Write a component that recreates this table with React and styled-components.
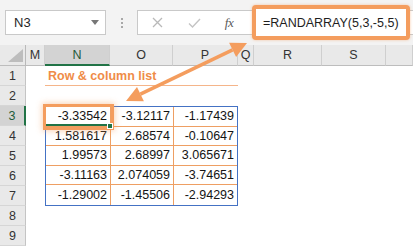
import React from 'react';
import styled, { createGlobalStyle } from 'styled-components';

const GlobalStyle = createGlobalStyle`
  html, body { margin: 0; padding: 0; background: #fff; overflow: hidden; }
  body { font-family: "Liberation Sans", Arial, sans-serif; }
  * { box-sizing: border-box; }
`;

const ORANGE = '#F49D5E';

const Page = styled.div`
  position: relative;
  width: 413px;
  height: 246px;
  overflow: hidden;
  background: #fff;
`;

const Toolbar = styled.div`
  display: flex;
  align-items: center;
  height: 45px;
  padding-left: 5px;
  background: #f3f3f3;
`;

const NameBox = styled.div`
  width: 101px;
  height: 25px;
  background: #fff;
  border: 1px solid #c9c9c9;
  display: flex;
  align-items: center;
  justify-content: space-between;
  padding: 0 6px 0 8px;
  font-size: 13px;
  color: #262626;
`;

const Splitter = styled.div`
  width: 31px;
  display: flex;
  justify-content: center;
  &::before {
    content: '';
    display: block;
    height: 10px;
    border-left: 2px dotted #a8a8a8;
  }
`;

const FormulaInput = styled.div`
  flex: 1;
  height: 25px;
  background: #fff;
  border: 1px solid #c9c9c9;
  border-right: none;
  display: flex;
  align-items: center;
`;

const IconSlot = styled.div`
  width: ${p => p.$w}px;
  display: flex;
  justify-content: center;
  align-items: center;
  color: #6a6a6a;
`;

const Fx = styled.span`
  font-family: "Liberation Serif", "Times New Roman", serif;
  font-style: italic;
  font-size: 13px;
  color: #5a5a5a;
  letter-spacing: -0.5px;
`;

const FormulaText = styled.div`
  margin-left: 6px;
  width: 158px;
  height: 35px;
  flex: none;
  border: 4px solid ${ORANGE};
  border-radius: 4px;
  background: #fff;
  box-shadow: 0 0 3px rgba(244, 157, 94, 0.55);
  display: flex;
  align-items: center;
  padding-left: 7px;
  font-size: 12.5px;
  color: #1e1e1e;
  white-space: nowrap;
`;

const Sheet = styled.div`
  display: grid;
  grid-template-columns: 26px 19px 65px 63px 65px 16px 68px 64px 1fr;
  grid-template-rows: 21px repeat(9, 20px);
`;

const Corner = styled.div`
  background: #e9e9e9;
  border-right: 1px solid #b9b9b9;
  border-bottom: 1px solid #bdbdbd;
  display: flex;
  align-items: flex-end;
  justify-content: flex-end;
  padding: 0 2px 3px 0;
`;

const ColHead = styled.div`
  background: ${p => (p.$active ? '#d3d3d3' : '#e9e9e9')};
  border-right: 1px solid #cfcfcf;
  border-bottom: ${p => (p.$active ? '2px solid #217346' : '1px solid #bdbdbd')};
  display: flex;
  align-items: center;
  justify-content: center;
  font-size: 12.5px;
  color: ${p => (p.$active ? '#1f5c3a' : '#333')};
  padding-top: ${p => (p.$active ? '1px' : '0')};
`;

const RowHead = styled.div`
  grid-column: 1;
  background: ${p => (p.$active ? '#d3d3d3' : '#e9e9e9')};
  border-right: ${p => (p.$active ? '2px solid #217346' : '1px solid #c4c4c4')};
  border-bottom: 1px solid #d6d6d6;
  display: flex;
  align-items: center;
  justify-content: center;
  font-size: 12.5px;
  color: ${p => (p.$active ? '#1f5c3a' : '#333')};
`;

const Title = styled.div`
  grid-column: 3 / 6;
  grid-row: 2;
  border-bottom: 1px solid #F5B58A;
  display: flex;
  align-items: center;
  padding-left: 3px;
  font-size: 12.5px;
  font-weight: bold;
  color: #EF8C48;
`;

const Table = styled.div`
  grid-column: 3 / 6;
  grid-row: 4 / 9;
  display: grid;
  grid-template-columns: 65px 63px 1fr;
  grid-template-rows: repeat(5, 1fr);
  border: 1px solid #4472C4;
`;

const Cell = styled.div`
  position: relative;
  display: flex;
  align-items: center;
  justify-content: flex-end;
  padding-right: 3px;
  font-size: 12.5px;
  color: #141414;
  border-right: ${p => (p.$lastCol ? 'none' : '1px solid #EE9F63')};
  border-bottom: ${p => (p.$lastRow ? 'none' : '1px solid #EE9F63')};
  ${p =>
    p.$selected &&
    `
    z-index: 1;
    box-shadow: 0 0 0 3px ${ORANGE}, 0 0 6px 4px rgba(244, 157, 94, 0.45), inset 0 -2px 0 #217346;
  `}
`;

const FillHandle = styled.span`
  position: absolute;
  right: -3px;
  bottom: -3px;
  width: 6px;
  height: 6px;
  background: #217346;
  border: 1px solid #fff;
`;

const ArrowLayer = styled.svg`
  position: absolute;
  left: 0;
  top: 0;
  pointer-events: none;
`;

const cols = ['M', 'N', 'O', 'P', 'Q', 'R', 'S', ''];
const data = [
  ['-3.33542', '-3.12117', '-1.17439'],
  ['1.581617', '2.68574', '-0.10647'],
  ['1.99573', '2.68997', '3.065671'],
  ['-3.11163', '2.074059', '-3.74651'],
  ['-1.29002', '-1.45506', '-2.94293'],
];

export default function App() {
  return (
    <Page>
      <GlobalStyle />
      <Toolbar>
        <NameBox>
          <span>N3</span>
          <svg width="8" height="5" viewBox="0 0 8 5">
            <path d="M0 0h8L4 5z" fill="#777" />
          </svg>
        </NameBox>
        <Splitter />
        <FormulaInput>
          <IconSlot $w={39}>
            <svg width="11" height="11" viewBox="0 0 11 11">
              <path d="M1 1l9 9M10 1l-9 9" stroke="#b9b9b9" strokeWidth="1.3" />
            </svg>
          </IconSlot>
          <IconSlot $w={35}>
            <svg width="13" height="10" viewBox="0 0 13 10">
              <path d="M1 5.5l3.5 3.5L12 1" stroke="#c4c4c4" strokeWidth="1.4" fill="none" />
            </svg>
          </IconSlot>
          <IconSlot $w={34}>
            <Fx>fx</Fx>
          </IconSlot>
          <FormulaText>=RANDARRAY(5,3,-5,5)</FormulaText>
        </FormulaInput>
      </Toolbar>

      <Sheet>
        <Corner>
          <svg width="15" height="13" viewBox="0 0 15 13">
            <path d="M15 0V13H0z" fill="#bdbdbd" />
          </svg>
        </Corner>
        {cols.map((c, i) => (
          <ColHead key={i} $active={c === 'N'}>
            {c}
          </ColHead>
        ))}
        {[1, 2, 3, 4, 5, 6, 7, 8, 9].map(n => (
          <RowHead key={n} $active={n === 3} style={{ gridRow: n + 1 }}>
            {n}
          </RowHead>
        ))}
        <Title>Row &amp; column list</Title>
        <Table>
          {data.map((row, r) =>
            row.map((v, c) => {
              const sel = r === 0 && c === 0;
              return (
                <Cell key={`${r}-${c}`} $lastCol={c === 2} $lastRow={r === 4} $selected={sel}>
                  {v}
                  {sel && <FillHandle />}
                </Cell>
              );
            })
          )}
        </Table>
      </Sheet>

      <ArrowLayer width="413" height="246" viewBox="0 0 413 246">
        <line x1="140.4" y1="94.1" x2="232.6" y2="49.9" stroke={ORANGE} strokeWidth="3.5" />
        <polygon points="126,101 143.9,101.3 137,86.9" fill={ORANGE} />
        <polygon points="247,43 236.1,57.1 229.1,42.7" fill={ORANGE} />
      </ArrowLayer>
    </Page>
  );
}
